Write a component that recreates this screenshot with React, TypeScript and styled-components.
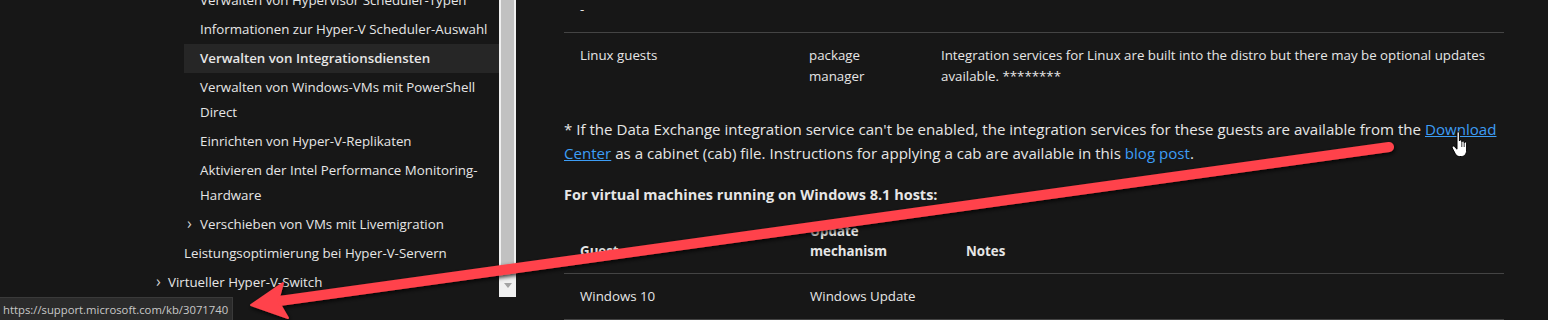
import styled, { createGlobalStyle } from "styled-components";

const GlobalStyle = createGlobalStyle`
  html, body {
    margin: 0;
    padding: 0;
    background: #171717;
  }
  body {
    font-family: "Open Sans", "Noto Sans", sans-serif;
    color: #e6e6e6;
  }
`;

type NavItem = {
  label: string;
  level: number;
  active?: boolean;
  expandable?: boolean;
};

const navItems: NavItem[] = [
  { label: "Verwalten von Hypervisor Scheduler-Typen", level: 3 },
  { label: "Informationen zur Hyper-V Scheduler-Auswahl", level: 3 },
  { label: "Verwalten von Integrationsdiensten", level: 3, active: true },
  { label: "Verwalten von Windows-VMs mit PowerShell Direct", level: 3 },
  { label: "Einrichten von Hyper-V-Replikaten", level: 3 },
  { label: "Aktivieren der Intel Performance Monitoring-Hardware", level: 3 },
  { label: "Verschieben von VMs mit Livemigration", level: 3, expandable: true },
  { label: "Leistungsoptimierung bei Hyper-V-Servern", level: 2 },
  { label: "Virtueller Hyper-V-Switch", level: 1, expandable: true },
];

// left edge of each nav level (the row background starts here)
const levelLeft: Record<number, number> = { 1: 168, 2: 184, 3: 184 };

export default function App() {
  return (
    <>
      <GlobalStyle />
      <Page>
        <Sidebar>
          <NavList>
            {navItems.map((item) => (
              <NavRow key={item.label} $level={item.level} $active={item.active}>
                {item.expandable && <Chevron $level={item.level}>›</Chevron>}
                <span>{item.label}</span>
              </NavRow>
            ))}
          </NavList>
        </Sidebar>
        <Scrollbar>
          <Thumb />
          <ScrollButton>
            <svg width="8" height="5" viewBox="0 0 8 5">
              <path d="M0 0 H8 L4 5 Z" fill="#a3a3a3" />
            </svg>
          </ScrollButton>
        </Scrollbar>
        <Main>
          <Table>
            <tbody>
              <Tr>
                <Td $w={229}>-</Td>
                <Td $w={132}></Td>
                <Td></Td>
              </Tr>
              <Tr $noBorder>
                <Td $w={229}>Linux guests</Td>
                <Td $w={132}>package manager</Td>
                <Td>
                  Integration services for Linux are built into the distro but there may be
                  optional updates available. ********
                </Td>
              </Tr>
            </tbody>
          </Table>
          <Paragraph>
            * If the Data Exchange integration service can't be enabled, the integration
            services for these guests are available from the{" "}
            <Link $hover href="#">Download Center</Link> as a cabinet (cab) file.
            Instructions for applying a cab are available in this <Link href="#">blog post</Link>.
          </Paragraph>
          <Heading>For virtual machines running on Windows 8.1 hosts:</Heading>
          <Table>
            <thead>
              <tr>
                <Th $w={230}>Guest</Th>
                <Th $w={156}>Update mechanism</Th>
                <Th>Notes</Th>
              </tr>
            </thead>
            <tbody>
              <Tr>
                <Td $w={230}>Windows 10</Td>
                <Td $w={156}>Windows Update</Td>
                <Td></Td>
              </Tr>
            </tbody>
          </Table>
        </Main>
        <StatusBar>https://support.microsoft.com/kb/3071740</StatusBar>
        <Overlay width="1548" height="320" viewBox="0 0 1548 320">
          <defs>
            <filter id="shadow" x="-10%" y="-50%" width="120%" height="200%">
              <feDropShadow dx="1" dy="2" stdDeviation="2" floodColor="#000" floodOpacity="0.8" />
            </filter>
          </defs>
          <g filter="url(#shadow)" fill="#ff434b" stroke="#ff434b">
            <line x1="1389" y1="147" x2="272" y2="302" strokeWidth="10" strokeLinecap="round" />
            <path d="M251 305 L283 283 L278 301 L288 318 Z" strokeWidth="2" strokeLinejoin="round" />
          </g>
          <g transform="translate(1451 131)">
            <path
              d="M6 1.8 C6 0.4 8.4 0.4 8.4 1.8 V10 C8.4 8.6 10.8 8.6 10.8 10 V11 C10.8 9.6 13.2 9.6 13.2 11 V12 C13.2 10.6 15.6 10.6 15.6 12 V19 C15.6 23 13.5 25.5 10.5 25.5 H8.5 C6.5 25.5 5.3 24.6 4.3 22.8 L1.2 17 C0.5 15.6 2.2 14.4 3.3 15.5 L6 18.2 Z"
              fill="#fff"
              stroke="#000"
              strokeWidth="1"
              strokeLinejoin="round"
            />
            <path d="M10.8 11 V16 M13.2 12 V16" stroke="#000" strokeWidth="0.8" fill="none" />
          </g>
        </Overlay>
      </Page>
    </>
  );
}

const Page = styled.div`
  position: relative;
  display: flex;
  width: 1548px;
  height: 320px;
  overflow: hidden;
  background: #171717;
`;

const Sidebar = styled.nav`
  width: 499px;
  flex-shrink: 0;
  overflow: hidden;
`;

const NavList = styled.ul`
  list-style: none;
  margin: -14px 0 0 0;
  padding: 0;
`;

const NavRow = styled.li<{ $level: number; $active?: boolean }>`
  position: relative;
  margin-left: ${(p) => levelLeft[p.$level]}px;
  padding: 2px 2px 2px ${(p) => (p.$level === 3 ? 16 : 0)}px;
  font-size: 13.3px;
  line-height: 25px;
  font-weight: ${(p) => (p.$active ? 600 : 400)};
  color: #e6e6e6;
  background: ${(p) => (p.$active ? "#262626" : "transparent")};
`;

const Chevron = styled.span<{ $level: number }>`
  position: absolute;
  left: ${(p) => (p.$level === 3 ? 3 : -12)}px;
  top: 1px;
  font-size: 16px;
  color: #cfcfcf;
`;

const Scrollbar = styled.div`
  width: 17px;
  height: 297px;
  flex-shrink: 0;
  display: flex;
  flex-direction: column;
  background: #f0f0f0;
  padding: 0 2px;
  box-sizing: border-box;
`;

const Thumb = styled.div`
  flex: 1;
  background: #c1c1c1;
  margin-bottom: 2px;
`;

const ScrollButton = styled.div`
  height: 24px;
  display: flex;
  align-items: center;
  justify-content: center;
`;

const Main = styled.main`
  width: 940px;
  margin-left: 48px;
  margin-top: -13px;
  font-size: 13.3px;
`;

const Table = styled.table`
  width: 100%;
  border-collapse: collapse;
  table-layout: fixed;
`;

const Tr = styled.tr<{ $noBorder?: boolean }>`
  border-bottom: ${(p) => (p.$noBorder ? "none" : "1px solid #444")};
`;

const Td = styled.td<{ $w?: number }>`
  box-sizing: border-box;
  width: ${(p) => (p.$w ? `${p.$w}px` : "auto")};
  padding: 12px 16px;
  vertical-align: top;
  line-height: 21px;
  color: #e6e6e6;
`;

const Th = styled.th<{ $w?: number }>`
  box-sizing: border-box;
  width: ${(p) => (p.$w ? `${p.$w}px` : "auto")};
  padding: 14px 16px 12px;
  text-align: left;
  vertical-align: bottom;
  line-height: 20px;
  font-weight: 700;
  color: #e6e6e6;
  border-bottom: 1px solid #444;
`;

const Paragraph = styled.p`
  margin: 18px 0 0;
  font-size: 15.1px;
  line-height: 24px;
`;

const Link = styled.a<{ $hover?: boolean }>`
  color: #3d9df5;
  text-decoration: ${(p) => (p.$hover ? "underline" : "none")};
`;

const Heading = styled.h3`
  margin: 18px 0 0;
  font-size: 14.5px;
  line-height: 24px;
  font-weight: 700;
`;

const StatusBar = styled.div`
  position: absolute;
  left: 0;
  bottom: 0;
  height: 22px;
  padding: 0 4px 0 3px;
  display: flex;
  align-items: center;
  background: #2b2b2b;
  border-top: 1px solid #3a3a3a;
  border-right: 1px solid #3a3a3a;
  font-size: 11.3px;
  color: #c8c8c8;
`;

const Overlay = styled.svg`
  position: absolute;
  left: 0;
  top: 0;
  pointer-events: none;
`;
